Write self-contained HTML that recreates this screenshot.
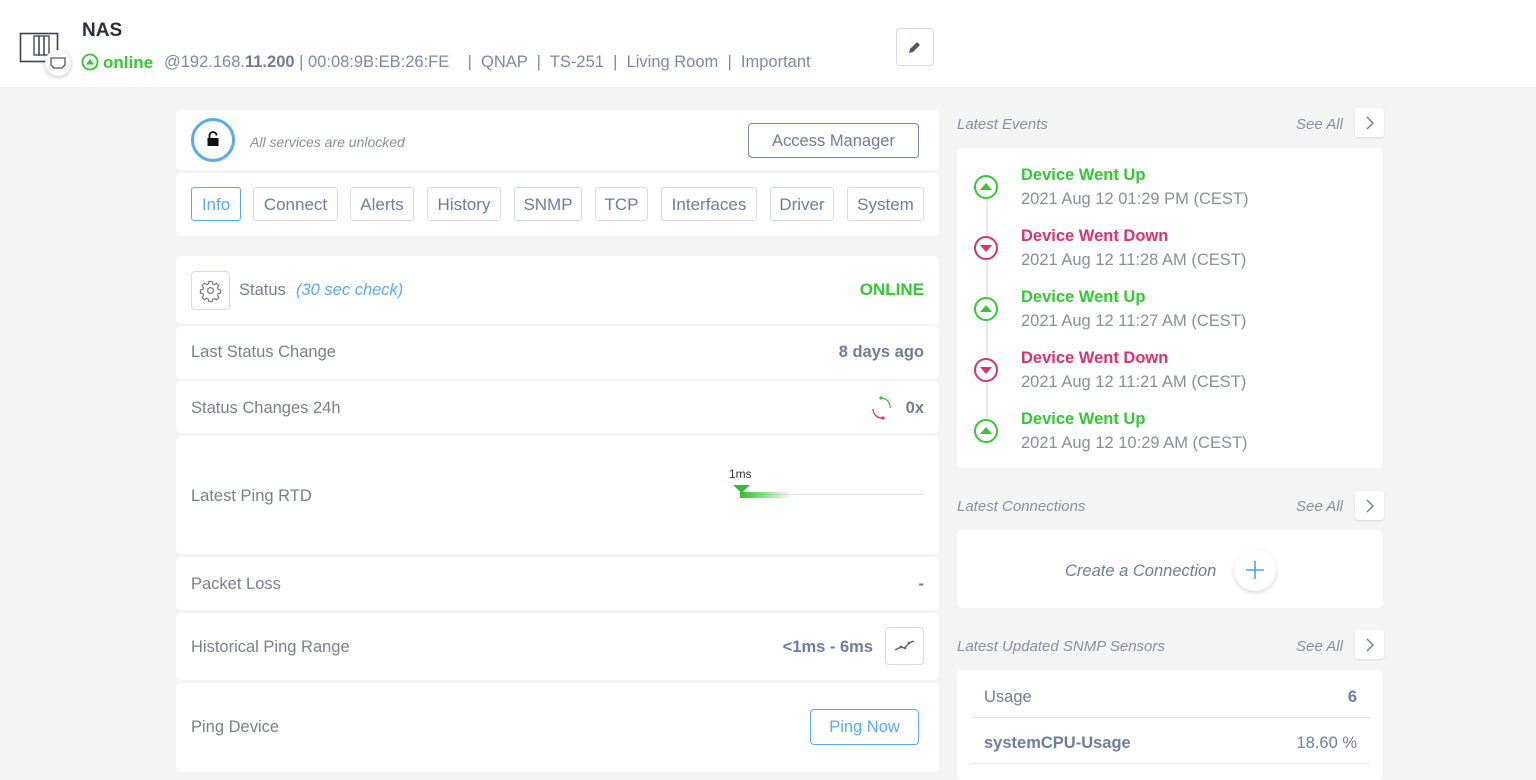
<!DOCTYPE html>
<html><head><meta charset="utf-8"><style>
*{box-sizing:border-box;margin:0;padding:0}
body{width:1536px;height:775px;overflow:hidden;background:#f4f4f5;font-family:"Liberation Sans",Arial,sans-serif;position:relative;color:#7b7f8a}
.a{position:absolute}
.card{position:absolute;background:#fff;border-radius:5px}
.lbl{position:absolute;font-size:16.5px;color:#7b7f8a}
.val{position:absolute;font-size:16.5px;font-weight:bold;color:#6f7d99;text-align:right}
.tab{position:absolute;top:187px;height:34px;border:1px solid #d8dde5;border-radius:3px;font-size:17px;color:#6f7d99;text-align:center;line-height:33px}
.hd{position:absolute;font-size:15px;font-style:italic;color:#8a8e99}
.see{position:absolute;left:1296px;font-size:15px;font-style:italic;color:#8a8e99}
.sb{position:absolute;left:1355px;width:29px;height:29px;background:#fff;border-radius:3px;box-shadow:0 1px 2px rgba(0,0,0,.1)}
.et{position:absolute;left:1021px;font-size:16.5px;font-weight:bold}
.ed{position:absolute;left:1021px;font-size:16.5px;color:#8a8e99}
.g{color:#35c735}.p{color:#d63372}
</style></head><body>
<div class="a" style="left:0;top:0;width:1536px;height:87px;background:#fff"></div>
<svg class="a" style="left:18px;top:30px" width="55" height="50" viewBox="0 0 55 50">
<rect x="2.5" y="3.5" width="37" height="28" fill="none" stroke="#3d4250" stroke-width="1.6"/>
<rect x="16" y="6" width="5" height="19" fill="none" stroke="#3d4250" stroke-width="1.3"/>
<rect x="21" y="6" width="5" height="19" fill="none" stroke="#3d4250" stroke-width="1.3"/>
<rect x="26" y="6" width="5" height="19" fill="none" stroke="#3d4250" stroke-width="1.3"/>
<circle cx="40" cy="33" r="13" fill="#fff" style="filter:drop-shadow(0 1px 2px rgba(0,0,0,.25))"/>
<path d="M33 28h14v7l-3 3h-8l-3-3z" fill="none" stroke="#555" stroke-width="1.3"/>
</svg>
<div class="a" style="left:82px;top:20px;font-size:19px;font-weight:bold;color:#2b2f3a">NAS</div>
<svg class="a" style="left:81px;top:53px" width="18" height="18"><circle cx="9" cy="9" r="7.5" fill="none" stroke="#35c735" stroke-width="1.8"/><path d="M5 11.5L9 6l4 5.5z" fill="#35c735"/></svg>
<div class="a" style="left:103px;top:53px;font-size:17px;font-weight:bold;color:#35c735">online</div>
<div class="a" style="left:164px;top:53px;font-size:16.5px;color:#7d88a3;white-space:pre">@192.168.<b style="color:#6f7d99">11.200</b> | 00:08:9B:EB:26:FE    |  QNAP  |  TS-251  |  Living Room  |  Important</div>
<div class="a" style="left:896px;top:28px;width:38px;height:38px;border:1px solid #d8dde5;border-radius:4px;background:#fff"></div>
<svg class="a" style="left:905px;top:37px" width="20" height="20"><path d="M4 16l1-4 7-7 3 3-7 7z" fill="#555"/></svg>

<div class="card" style="left:176px;top:110px;width:763px;height:60px"></div>
<div class="a" style="left:191px;top:118px;width:44px;height:44px;border-radius:50%;border:3px solid #5aabf0"></div>
<svg class="a" style="left:206px;top:131px" width="14" height="16"><path d="M3.5 7V4.5a3.5 3.5 0 0 1 7 0" fill="none" stroke="#111" stroke-width="1.8"/><rect x="1.5" y="7" width="11" height="8" fill="#111"/></svg>
<div class="a" style="left:250px;top:134px;font-size:14px;font-style:italic;color:#8a8e99">All services are unlocked</div>
<div class="a" style="left:748px;top:123px;width:171px;height:35px;border:1.5px solid #7d88a3;border-radius:4px;font-size:16.5px;color:#6f7d99;text-align:center;line-height:34px">Access Manager</div>

<div class="card" style="left:176px;top:173px;width:763px;height:63px"></div>
<div class="tab" style="left:191px;width:50px;border-color:#5aabf0;color:#5aabf0">Info</div>
<div class="tab" style="left:253px;width:85px">Connect</div>
<div class="tab" style="left:350px;width:64px">Alerts</div>
<div class="tab" style="left:427px;width:74px">History</div>
<div class="tab" style="left:514px;width:68px">SNMP</div>
<div class="tab" style="left:595px;width:53px">TCP</div>
<div class="tab" style="left:661px;width:96px">Interfaces</div>
<div class="tab" style="left:770px;width:64px">Driver</div>
<div class="tab" style="left:847px;width:77px">System</div>

<div class="card" style="left:176px;top:256px;width:763px;height:68px"></div>
<div class="a" style="left:191px;top:271px;width:39px;height:39px;border:1px solid #d8dde5;border-radius:4px"></div>
<svg class="a" style="left:199px;top:279px" width="23" height="23" viewBox="0 0 24 24"><circle cx="12" cy="12" r="3" fill="none" stroke="#777" stroke-width="1.3"/><path d="M10.3 2.5h3.4l.5 2.6 1.9.8 2.2-1.5 2.4 2.4-1.5 2.2.8 1.9 2.5.5v3.4l-2.5.5-.8 1.9 1.5 2.2-2.4 2.4-2.2-1.5-1.9.8-.5 2.6h-3.4l-.5-2.6-1.9-.8-2.2 1.5-2.4-2.4 1.5-2.2-.8-1.9-2.5-.5v-3.4l2.5-.5.8-1.900-1.5-2.2 2.4-2.4 2.2 1.5 1.9-.8z" fill="none" stroke="#777" stroke-width="1.2"/></svg>
<div class="lbl" style="left:239px;top:281px">Status</div>
<div class="a" style="left:296px;top:281px;font-size:16.5px;font-style:italic;color:#5aabf0">(30 sec check)</div>
<div class="val" style="left:800px;width:124px;top:280px;color:#35c735;font-size:17px">ONLINE</div>

<div class="card" style="left:176px;top:326px;width:763px;height:53px"></div>
<div class="lbl" style="left:191px;top:343px">Last Status Change</div>
<div class="val" style="left:760px;width:164px;top:343px">8 days ago</div>

<div class="card" style="left:176px;top:381px;width:763px;height:52px"></div>
<div class="lbl" style="left:191px;top:399px">Status Changes 24h</div>
<svg class="a" style="left:867px;top:393px" width="30" height="30"><path d="M14 5a9 9 0 0 1 9 10" fill="none" stroke="#35c735" stroke-width="1.3"/><circle cx="14" cy="5" r="1.6" fill="#35c735"/><path d="M16 25a9 9 0 0 1-10-9" fill="none" stroke="#d63372" stroke-width="1.3"/><circle cx="16" cy="25" r="1.6" fill="#d63372"/></svg>
<div class="val" style="left:880px;width:44px;top:399px">0x</div>

<div class="card" style="left:176px;top:436px;width:763px;height:118px"></div>
<div class="lbl" style="left:191px;top:487px">Latest Ping RTD</div>
<div class="a" style="left:729px;top:467px;font-size:12px;color:#333">1ms</div>
<div class="a" style="left:740px;top:494px;width:184px;height:1px;background:#e5e7ea"></div>
<div class="a" style="left:740px;top:492px;width:52px;height:6px;background:linear-gradient(90deg,#2cc22c,rgba(44,194,44,0))"></div>
<svg class="a" style="left:733px;top:485px" width="17" height="8"><path d="M0 0h17L8.5 8z" fill="#2cc22c"/></svg>

<div class="card" style="left:176px;top:557px;width:763px;height:53px"></div>
<div class="lbl" style="left:191px;top:575px">Packet Loss</div>
<div class="val" style="left:880px;width:44px;top:575px">-</div>

<div class="card" style="left:176px;top:613px;width:763px;height:67px"></div>
<div class="lbl" style="left:191px;top:638px">Historical Ping Range</div>
<div class="val" style="left:700px;width:173px;top:638px">&lt;1ms - 6ms</div>
<div class="a" style="left:885px;top:627px;width:39px;height:38px;border:1px solid #d8dde5;border-radius:4px"></div>
<svg class="a" style="left:893px;top:636px" width="24" height="20"><path d="M2 14l6-3 4 1 4-5 5-2" fill="none" stroke="#666" stroke-width="1.4"/><circle cx="8" cy="11" r="1.4" fill="#666"/><circle cx="12" cy="12" r="1.4" fill="#666"/><circle cx="16" cy="7" r="1.4" fill="#666"/></svg>

<div class="card" style="left:176px;top:683px;width:763px;height:89px"></div>
<div class="lbl" style="left:191px;top:718px">Ping Device</div>
<div class="a" style="left:810px;top:709px;width:109px;height:36px;border:1.5px solid #5aabf0;border-radius:4px;font-size:16.5px;color:#5aabf0;text-align:center;line-height:35px">Ping Now</div>

<div class="hd" style="left:957px;top:116px">Latest Events</div>
<div class="see" style="top:116px">See All</div>
<div class="sb" style="top:108px"></div>
<svg class="a" style="left:1363px;top:114px" width="14" height="18"><path d="M4 3l6 6-6 6" fill="none" stroke="#6f7d99" stroke-width="1.4"/></svg>
<div class="card" style="left:957px;top:148px;width:426px;height:320px"></div>
<div class="a" style="left:986px;top:195px;width:2px;height:235px;background:#e8e8e8"></div>
<svg class="a" style="left:973px;top:174px" width="26" height="270">
<g fill="#fff" stroke-width="2">
<circle cx="13" cy="13" r="11" stroke="#35c735"/><circle cx="13" cy="74" r="11" stroke="#d63372"/><circle cx="13" cy="135" r="11" stroke="#35c735"/><circle cx="13" cy="196" r="11" stroke="#d63372"/><circle cx="13" cy="257" r="11" stroke="#35c735"/></g>
<path d="M7 16l6-7 6 7z" fill="#35c735"/><path d="M7 71l6 7 6-7z" fill="#d63372"/><path d="M7 138l6-7 6 7z" fill="#35c735"/><path d="M7 193l6 7 6-7z" fill="#d63372"/><path d="M7 260l6-7 6 7z" fill="#35c735"/>
</svg>
<div class="et g" style="top:166px">Device Went Up</div><div class="ed" style="top:190px">2021 Aug 12 01:29 PM (CEST)</div>
<div class="et p" style="top:227px">Device Went Down</div><div class="ed" style="top:251px">2021 Aug 12 11:28 AM (CEST)</div>
<div class="et g" style="top:288px">Device Went Up</div><div class="ed" style="top:312px">2021 Aug 12 11:27 AM (CEST)</div>
<div class="et p" style="top:349px">Device Went Down</div><div class="ed" style="top:373px">2021 Aug 12 11:21 AM (CEST)</div>
<div class="et g" style="top:410px">Device Went Up</div><div class="ed" style="top:434px">2021 Aug 12 10:29 AM (CEST)</div>

<div class="hd" style="left:957px;top:498px">Latest Connections</div>
<div class="see" style="top:498px">See All</div>
<div class="sb" style="top:491px"></div>
<svg class="a" style="left:1363px;top:497px" width="14" height="18"><path d="M4 3l6 6-6 6" fill="none" stroke="#6f7d99" stroke-width="1.4"/></svg>
<div class="card" style="left:957px;top:530px;width:426px;height:78px"></div>
<div class="a" style="left:1065px;top:562px;font-size:16.5px;font-style:italic;color:#6f7d99">Create a Connection</div>
<div class="a" style="left:1234px;top:549px;width:42px;height:42px;border-radius:50%;background:#fff;box-shadow:0 2px 4px rgba(0,0,0,.15)"></div>
<svg class="a" style="left:1245px;top:560px" width="20" height="20"><path d="M10 1v18M1 10h18" stroke="#4aa3f0" stroke-width="1.6"/></svg>

<div class="hd" style="left:957px;top:638px">Latest Updated SNMP Sensors</div>
<div class="see" style="top:638px">See All</div>
<div class="sb" style="top:630px"></div>
<svg class="a" style="left:1363px;top:636px" width="14" height="18"><path d="M4 3l6 6-6 6" fill="none" stroke="#6f7d99" stroke-width="1.4"/></svg>
<div class="card" style="left:957px;top:670px;width:426px;height:110px"></div>
<div class="a" style="left:984px;top:688px;font-size:16.5px;color:#6f7d99">Usage</div>
<div class="val" style="left:1300px;width:57px;top:688px">6</div>
<div class="a" style="left:972px;top:717px;width:398px;height:1px;background:#e5e7ea"></div>
<div class="a" style="left:984px;top:734px;font-size:16.5px;font-weight:bold;color:#6f7d99">systemCPU-Usage</div>
<div class="a" style="left:1250px;width:107px;top:734px;font-size:16.5px;color:#6f7d99;text-align:right">18.60 %</div>
<div class="a" style="left:972px;top:763px;width:398px;height:1px;background:#e5e7ea"></div>
</body></html>
